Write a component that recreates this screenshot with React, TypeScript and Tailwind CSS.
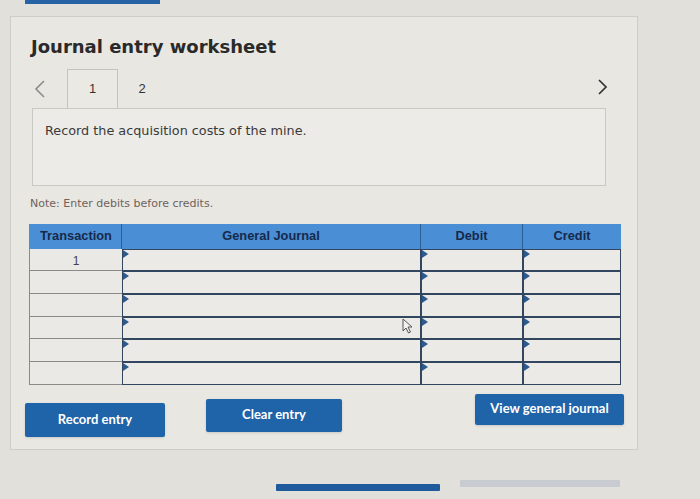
import React from 'react';

const rows = [1, 2, 3, 4, 5, 6];

function Marker() {
  return <span className="absolute left-0 top-0 w-0 h-0 border-t-[4px] border-b-[4px] border-l-[6px] border-t-transparent border-b-transparent border-l-[#2b5a8f]" />;
}

function InputCell({ w }: { w: string }) {
  return (
    <div className={`relative ${w} h-full border-[1.5px] border-[#33465f] bg-[#eceae6]`}>
      <Marker />
    </div>
  );
}

export default function App() {
  return (
    <div className="w-[700px] h-[499px] bg-[#e2e0db] overflow-hidden relative" style={{ fontFamily: '"DejaVu Sans", Verdana, sans-serif' }}>
      <div className="ml-[25px] w-[135px] h-[4px] bg-[#2562a6]" />

      <div className="ml-[10px] mt-[12px] w-[628px] h-[434px] border border-[#cfcdc8] bg-[#e9e7e2]">
        <h1 className="ml-[20px] mt-[19px] text-[18px] leading-[21px] font-bold text-[#2a2a2a]">Journal entry worksheet</h1>

        <div className="ml-[21px] mt-[12px] w-[574px] flex items-end h-[39px]">
          <div className="w-[35px] pl-[2px] self-center">
            <svg width="12" height="18" viewBox="0 0 12 18"><path d="M10 1 L2 9 L10 17" fill="none" stroke="#8a8a8a" strokeWidth="1.6" /></svg>
          </div>
          <div className="w-[51px] h-[39px] border border-b-0 border-[#c5c3be] bg-[#ebe9e4] flex items-center justify-center text-[13px] text-[#333]" style={{ fontFamily: '"Liberation Sans", Arial, sans-serif' }}>1</div>
          <div className="w-[48px] h-[39px] flex items-center justify-center text-[13px] text-[#333]" style={{ fontFamily: '"Liberation Sans", Arial, sans-serif' }}>2</div>
          <div className="flex-1" />
          <div className="self-center mr-[-2px] mb-[4px]">
            <svg width="11" height="16" viewBox="0 0 11 16"><path d="M2 1 L9 8 L2 15" fill="none" stroke="#333" strokeWidth="1.7" /></svg>
          </div>
        </div>

        <div className="ml-[21px] w-[574px] h-[78px] border border-[#cac8c3] bg-[#ecebe7] pl-[12px] pt-[12px]">
          <p className="text-[12.8px] text-[#3a3a3a]">Record the acquisition costs of the mine.</p>
        </div>

        <p className="ml-[19px] mt-[10px] text-[11px] text-[#6e625a]">Note: Enter debits before credits.</p>

        <div className="ml-[18px] mt-[11px] w-[592px]">
          <div className="flex h-[25px] bg-[#4a8fd6] text-[#17294a] text-[12.8px] font-bold" style={{ fontFamily: '"Liberation Sans", Arial, sans-serif' }}>
            <div className="w-[93px] pl-[11px] flex items-center border-r border-[#2c5f99]">Transaction</div>
            <div className="w-[299px] flex items-center justify-center border-r border-[#2c5f99]">General Journal</div>
            <div className="w-[102px] flex items-center justify-center border-r border-[#2c5f99]">Debit</div>
            <div className="w-[98px] flex items-center justify-center">Credit</div>
          </div>
          {rows.map(r => (
            <div key={r} className="flex h-[22.7px]">
              <div className="w-[93px] h-full border-l border-b border-[#8c8a86] bg-[#ebe9e5] flex justify-center pt-[3px] text-[12px] text-[#444]" style={{ fontFamily: '"Liberation Sans", Arial, sans-serif' }}>
                {r === 1 ? '1' : ''}
              </div>
              <InputCell w="w-[299px]" />
              <InputCell w="w-[102px]" />
              <InputCell w="w-[98px]" />
            </div>
          ))}
        </div>

        <div className="flex items-start ml-[14px] mt-[14px]" style={{ fontFamily: 'Lato, "Open Sans", sans-serif' }}>
          <button className="mt-[4px] w-[140px] h-[34px] bg-[#1f63a8] text-white text-[13px] font-bold rounded-[2px] shadow-sm">Record entry</button>
          <button className="ml-[41px] w-[136px] h-[33px] bg-[#1f63a8] text-white text-[13px] font-bold rounded-[2px] shadow-sm">Clear entry</button>
          <button className="ml-[133px] -mt-[5px] w-[149px] h-[31px] bg-[#1f63a8] text-white text-[13px] font-bold rounded-[2px] shadow-sm">View general journal</button>
        </div>
      </div>

      <div className="flex items-start mt-[30px]">
        <div className="ml-[276px] mt-[4px] w-[164px] h-[7px] bg-[#1f5a9c] rounded-[1px]" />
        <div className="ml-[20px] w-[160px] h-[7px] bg-[#c8ccd2] rounded-[1px]" />
      </div>

      <svg className="absolute left-[402px] top-[318px]" width="12" height="16" viewBox="0 0 12 16">
        <path d="M1 1 L1 13 L4 10 L6.5 15 L8.5 14 L6 9 L10 9 Z" fill="#f2f2f2" stroke="#555" strokeWidth="1" />
      </svg>
    </div>
  );
}
